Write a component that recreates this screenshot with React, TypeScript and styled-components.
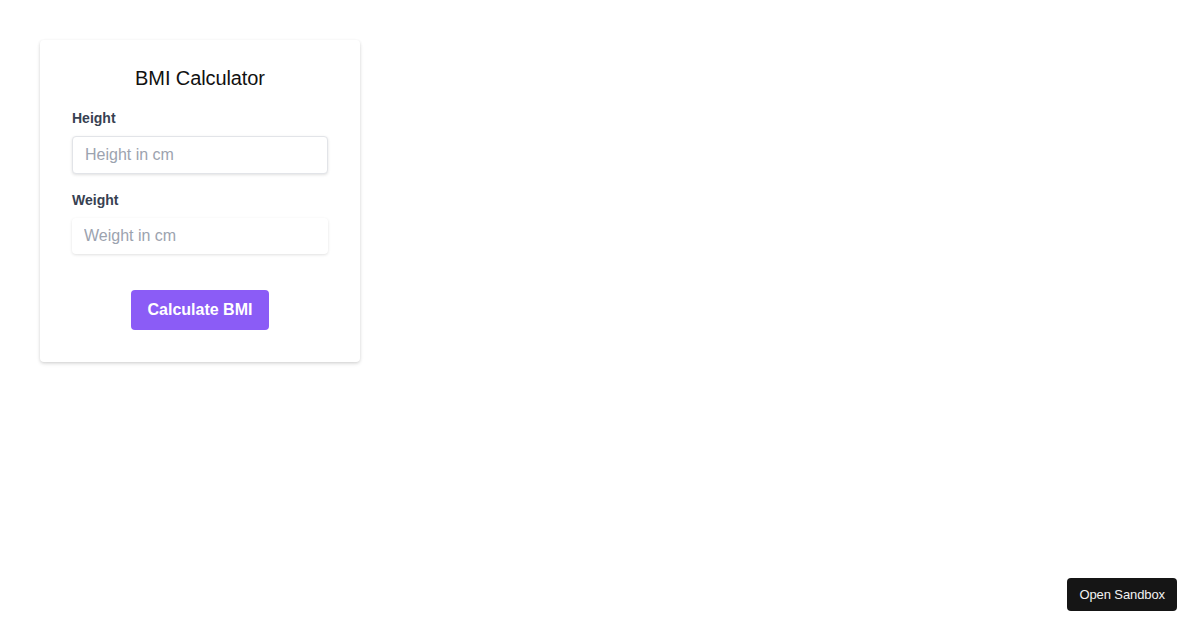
import { FC } from "react";
import styled, { createGlobalStyle } from "styled-components";

const GlobalStyle = createGlobalStyle`
  body {
    margin: 0;
    background: #ffffff;
    font-family: "Liberation Sans", Arial, sans-serif;
  }
`;

const Page = styled.div`
  padding: 40px;
  min-height: 630px;
  box-sizing: border-box;
`;

const Card = styled.div`
  width: 320px;
  box-sizing: border-box;
  padding: 24px 32px 32px;
  background: #fff;
  border-radius: 4px;
  box-shadow: 0 1px 3px rgba(0, 0, 0, 0.12), 0 2px 4px rgba(0, 0, 0, 0.08);
  display: flex;
  flex-direction: column;
`;

const Title = styled.h2`
  margin: 0 0 16px;
  font-size: 20px;
  line-height: 28px;
  font-weight: 400;
  letter-spacing: -0.1px;
  color: #111;
  text-align: center;
`;

const Field = styled.div`
  display: flex;
  flex-direction: column;
  gap: 8px;
  margin-bottom: 16px;
`;

const Label = styled.label`
  font-size: 14px;
  line-height: 20px;
  font-weight: 700;
  color: #374151;
`;

const Input = styled.input<{ $bordered?: boolean }>`
  box-sizing: content-box;
  height: 20px;
  padding: 8px 12px;
  font-family: inherit;
  font-size: 16px;
  line-height: 20px;
  color: #111;
  border-radius: 4px;
  border: ${(p) => (p.$bordered ? "1px solid #e2e4e8" : "none")};
  box-shadow: 0 1px 3px rgba(0, 0, 0, 0.12);
  outline: none;
  &::placeholder {
    color: #9ca3af;
  }
`;

const Actions = styled.div`
  display: flex;
  justify-content: center;
  padding-top: 20px;
`;

const Button = styled.button`
  height: 40px;
  padding: 0 17px;
  background: #8b5cf6;
  color: #fff;
  border: none;
  border-radius: 4px;
  font-family: inherit;
  font-size: 16px;
  font-weight: 700;
  cursor: pointer;
`;

const SandboxButton = styled.button`
  position: fixed;
  right: 23px;
  bottom: 19px;
  height: 33px;
  padding: 0 12px;
  background: #151515;
  color: #f2f2f2;
  border: none;
  border-radius: 4px;
  font-family: "Liberation Sans", Arial, sans-serif;
  font-size: 13px;
  letter-spacing: -0.1px;
`;

const App: FC = () => {
  return (
    <>
      <GlobalStyle />
      <Page>
        <Card>
          <Title>BMI Calculator</Title>
          <Field>
            <Label htmlFor="height">Height</Label>
            <Input id="height" $bordered placeholder="Height in cm" />
          </Field>
          <Field>
            <Label htmlFor="weight">Weight</Label>
            <Input id="weight" placeholder="Weight in cm" />
          </Field>
          <Actions>
            <Button>Calculate BMI</Button>
          </Actions>
        </Card>
      </Page>
      <SandboxButton>Open Sandbox</SandboxButton>
    </>
  );
};

export default App;
